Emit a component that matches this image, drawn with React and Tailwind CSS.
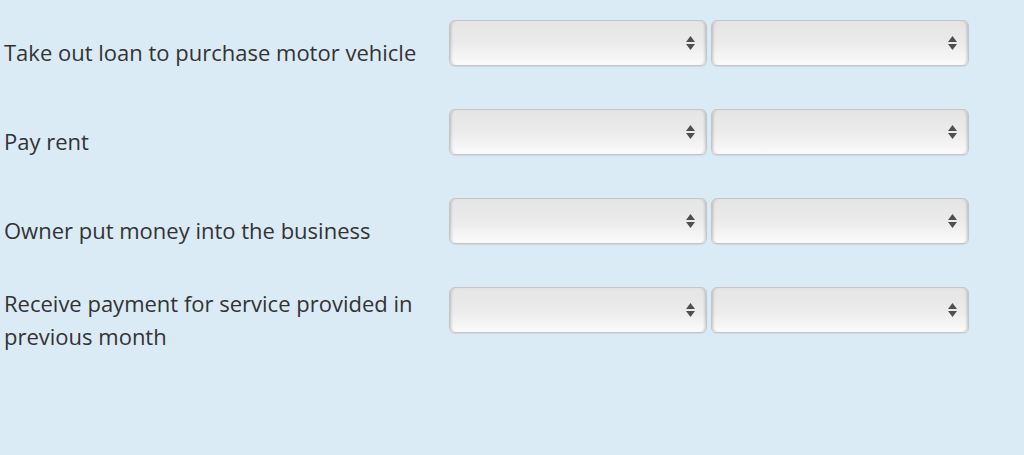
import React from "react";

const rows = [
  "Take out loan to purchase motor vehicle",
  "Pay rent",
  "Owner put money into the business",
  "Receive payment for service provided in previous month",
];

function Arrows() {
  return (
    <svg width="11" height="15" viewBox="0 0 11 15" className="absolute right-[10px] top-1/2 -translate-y-1/2">
      <polygon points="5.5,0.5 10,6.5 1,6.5" fill="#4f4f4f" />
      <polygon points="1,8.5 10,8.5 5.5,14.5" fill="#4f4f4f" />
    </svg>
  );
}

function FakeSelect() {
  return (
    <div className="relative w-[258px] h-[46px] rounded-[6px] border border-[#c6c6c6] bg-gradient-to-b from-[#e5e5e5] via-[#ebebeb] to-[#fbfbfb] shadow-[inset_3px_0_3px_-2px_rgba(0,0,0,0.2),inset_-3px_0_3px_-2px_rgba(0,0,0,0.2),0_1px_1px_rgba(0,0,0,0.08)]">
      <Arrows />
    </div>
  );
}

export default function App() {
  return (
    <div className="w-[1024px] h-[455px] bg-[#dbebf6] pt-[20px] text-[#333] font-['Open_Sans',sans-serif] flex flex-col gap-[23px]">
      {rows.map((r) => (
        <div key={r} className="flex h-[66px]">
          <div className="w-[449px] pl-[4px] pr-[8px] flex items-center text-[22px] leading-[33px] -mt-[1px]">
            {r}
          </div>
          <div className="flex gap-[4px] items-start">
            <FakeSelect />
            <FakeSelect />
          </div>
        </div>
      ))}
    </div>
  );
}
